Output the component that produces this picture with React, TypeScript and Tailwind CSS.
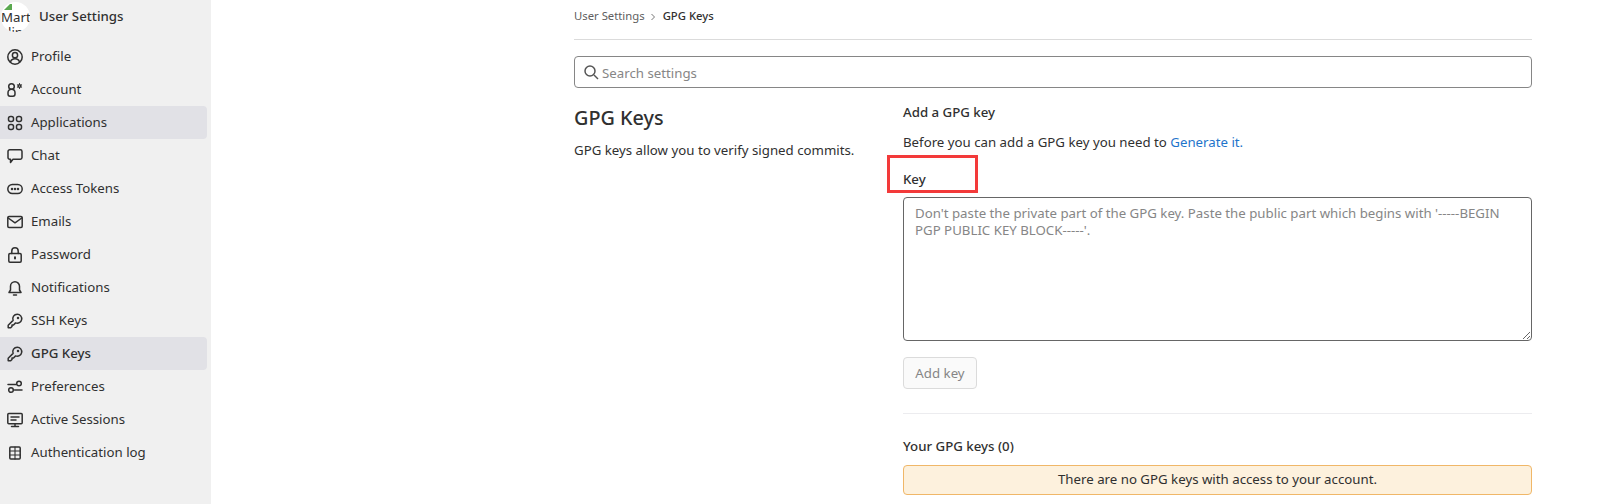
import React from 'react';

const Svg = ({ children }: { children: React.ReactNode }) => (
  <svg width="16" height="16" viewBox="0 0 16 16" fill="none" stroke="#303030" strokeWidth="1.5" strokeLinecap="round" strokeLinejoin="round" className="shrink-0">
    {children}
  </svg>
);

const icons: Record<string, React.ReactNode> = {
  profile: (
    <>
      <circle cx="8" cy="8" r="7.2" />
      <circle cx="8" cy="6.200" r="2.600" />
      <path d="M3.500 13c.6-2.200 2.300-3.200 4.500-3.200s3.900 1 4.500 3.200" />
    </>
  ),
  account: (
    <>
      <circle cx="4.500" cy="4.500" r="2.800" />
      <path d="M4.500 7.300c-2.300 0-3.500 1.600-3.500 3.500v1.200c0 1.200.8 2.200 2 2.200h3c1.200 0 2-1 2-2.200v-1.200c0-1.900-1.200-3.500-3.500-3.500z" />
      <circle cx="12.500" cy="4" r="2" fill="#303030" stroke="none" />
      <path d="M12.500 1.500v5M10.300 2.800l4.400 2.400M10.300 5.200l4.400-2.400" strokeWidth="1" />
      <circle cx="12.500" cy="4" r=".6" fill="#f0f0f0" stroke="none" />
    </>
  ),
  apps: (
    <>
      <rect x="1.500" y="1.500" width="5" height="5" rx="2" />
      <rect x="9.500" y="1.500" width="5" height="5" rx="2" />
      <rect x="1.500" y="9.500" width="5" height="5" rx="2" />
      <rect x="9.500" y="9.500" width="5" height="5" rx="2" />
    </>
  ),
  chat: <path d="M2.700 1.800h10.600c.9 0 1.700.8 1.700 1.700v6c0 .9-.8 1.700-1.700 1.700H6L3.500 14.500v-3.300h-.8c-.9 0-1.700-.8-1.700-1.700v-6c0-.9.8-1.700 1.700-1.700z" />,
  token: (
    <>
      <rect x="0.800" y="3.500" width="14.400" height="9" rx="4.500" />
      <circle cx="5" cy="8" r=".5" fill="#303030" />
      <circle cx="8" cy="8" r=".5" fill="#303030" />
      <circle cx="11" cy="8" r=".5" fill="#303030" />
    </>
  ),
  mail: (
    <>
      <rect x="0.800" y="2.500" width="14.400" height="11" rx="1.200" />
      <path d="M1.200 4l6.800 4.800L14.800 4" />
    </>
  ),
  lock: (
    <>
      <rect x="1.800" y="6.500" width="12.400" height="8.700" rx="1.200" />
      <path d="M4.800 6.500V4a3.200 3.200 0 0 1 6.400 0v2.500" />
      <path d="M8 10.200v1.300" strokeWidth="2" />
    </>
  ),
  bell: (
    <>
      <path d="M2 12.500h12l-1.500-2.500V6.300a4.500 4.500 0 0 0-9 0V10z" />
      <path d="M6.500 15h3" />
    </>
  ),
  key: (
    <>
      <path d="M10.300 1.200a4.500 4.500 0 1 1-1.700 8.700l-2.100 2.100H5v1.500l-1.300 1.300H1.200v-2.500l4.900-4.900a4.500 4.500 0 0 1 4.200-6.200z" />
      <circle cx="11" cy="5" r=".5" fill="#303030" />
    </>
  ),
  prefs: (
    <>
      <path d="M1 5.500h8M7.500 11H15" />
      <circle cx="12" cy="4.500" r="2.300" />
      <circle cx="4" cy="11" r="2.300" />
    </>
  ),
  monitor: (
    <>
      <rect x="0.800" y="1.500" width="14.400" height="10.200" rx="1" />
      <path d="M4 5h8M4 8h5M8 11.700v2.800M4.500 14.500h7" />
    </>
  ),
  log: (
    <>
      <rect x="2.800" y="2" width="10.400" height="12" rx="1" />
      <path d="M8 2v12M2.800 6h10.400M2.800 10h10.400" strokeWidth="1.100" />
    </>
  ),
};

const navItems = [
  { label: 'Profile', icon: 'profile' },
  { label: 'Account', icon: 'account' },
  { label: 'Applications', icon: 'apps', active: true },
  { label: 'Chat', icon: 'chat' },
  { label: 'Access Tokens', icon: 'token' },
  { label: 'Emails', icon: 'mail' },
  { label: 'Password', icon: 'lock' },
  { label: 'Notifications', icon: 'bell' },
  { label: 'SSH Keys', icon: 'key' },
  { label: 'GPG Keys', icon: 'key', active: true, strong: true },
  { label: 'Preferences', icon: 'prefs' },
  { label: 'Active Sessions', icon: 'monitor' },
  { label: 'Authentication log', icon: 'log' },
];

export default function App() {
  return (
    <div className="flex h-[504px] overflow-hidden bg-white font-['Noto_Sans',sans-serif] text-[13.25px] text-[#303030]">
      <aside className="w-[211px] shrink-0 bg-[#f0f0f0]">
        <div className="flex h-[33px] items-center">
          <div className="relative ml-px h-[30px] w-[29px] shrink-0 overflow-hidden rounded-full bg-white text-center text-[13.25px] leading-[15px]">
            {/* broken avatar image, its alt text shows */}
            <svg width="14" height="6" viewBox="0 0 14 6" className="absolute top-[2px] left-[2px]">
              <path d="M1 6l6-6h2v6z" fill="#5aa84f" />
            </svg>
            <div className="pt-[8px]">Mart lin</div>
          </div>
          <span className="ml-[9px] font-medium">User Settings</span>
        </div>
        <nav className="mt-[7px] w-[207px]">
          {navItems.map((item) => (
            <div
              key={item.label}
              className={`flex h-[33px] items-center gap-[8px] rounded-r-[4px] pl-[7px] ${item.active ? 'bg-[#e1e1e6]' : ''} ${item.strong ? 'font-medium' : ''}`}
            >
              <Svg>{icons[item.icon]}</Svg>
              <span>{item.label}</span>
            </div>
          ))}
        </nav>
      </aside>
      <main className="ml-[363px] w-[958px] shrink-0">
        <div className="flex h-[40px] items-center border-b border-[#dbdbdb] pb-[6px] text-[11.3px]">
          <span className="text-[#5e5e5e]">User Settings</span>
          <svg width="8" height="8" viewBox="0 0 8 8" fill="none" stroke="#777" className="mr-[6px] ml-[4px]">
            <path d="M2.500 1l3 3-3 3" />
          </svg>
          <span className="font-medium">GPG Keys</span>
        </div>
        <div className="mt-4 flex h-[32px] items-center gap-[3px] rounded-[4px] border border-[#868686] px-2">
          <svg width="16" height="16" viewBox="0 0 16 16" fill="none" stroke="#555" strokeWidth="1.500" className="shrink-0">
            <circle cx="7" cy="7" r="5" />
            <path d="M11 11l4 4" />
          </svg>
          <input placeholder="Search settings" className="min-w-0 flex-1 pt-[3px] outline-none placeholder:text-[#868686]" />
        </div>
        <div className="mt-[6px] flex">
          <div className="w-[329px] shrink-0">
            <h2 className="mt-[8px] text-[19.8px] leading-[32px] font-medium">GPG Keys</h2>
            <p className="mt-[7px]">GPG keys allow you to verify signed commits.</p>
          </div>
          <div className="min-w-0 flex-1">
            <h4 className="mt-[8px] leading-[20px] font-medium">Add a GPG key</h4>
            <p className="mt-[10px] leading-[20px]">
              Before you can add a GPG key you need to <span className="text-[#1f75cb]">Generate it.</span>
            </p>
            <div className="relative mt-[17px] leading-[20px] font-medium">
              Key
              <div className="absolute top-[-14px] left-[-16px] h-[38px] w-[91px] border-[3px] border-[#f33a3a]" />
            </div>
            <textarea
              placeholder="Don't paste the private part of the GPG key. Paste the public part which begins with '-----BEGIN PGP PUBLIC KEY BLOCK-----'."
              className="mt-[8px] block h-[144px] w-full rounded-[4px] border border-[#666] px-[11px] py-[7px] leading-[17px] outline-none placeholder:text-[#868686]"
            />
            <button className="mt-[16px] h-[32px] w-[74px] rounded-[4px] border border-[#dbdbdb] bg-[#fafafa] pt-px text-[#868686]">Add key</button>
            <div className="mt-[24px] border-t border-[#ececef]" />
            <h5 className="mt-[22px] leading-[20px] font-medium">Your GPG keys (0)</h5>
            <div className="mt-[9px] flex h-[30px] items-center justify-center rounded-[4px] border border-[#f0b768] bg-[#fdf1dd]">
              There are no GPG keys with access to your account.
            </div>
          </div>
        </div>
      </main>
    </div>
  );
}
